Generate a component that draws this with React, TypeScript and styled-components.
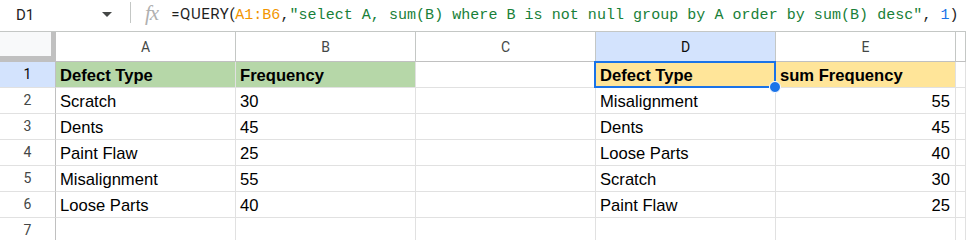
import React from "react";
import styled, { createGlobalStyle, css } from "styled-components";

const GlobalStyle = createGlobalStyle`
  html, body {
    margin: 0;
    padding: 0;
    background: #ffffff;
    overflow: hidden;
  }
`;

type Row = { a: string; b: string; d: string; e: string };

const rows: Row[] = [
  { a: "Scratch", b: "30", d: "Misalignment", e: "55" },
  { a: "Dents", b: "45", d: "Dents", e: "45" },
  { a: "Paint Flaw", b: "25", d: "Loose Parts", e: "40" },
  { a: "Misalignment", b: "55", d: "Scratch", e: "30" },
  { a: "Loose Parts", b: "40", d: "Paint Flaw", e: "25" },
  { a: "", b: "", d: "", e: "" },
];

const columns = ["A", "B", "C", "D", "E", ""];

const App: React.FC = () => {
  return (
    <>
      <GlobalStyle />
      <Page>
        <FormulaBar>
          <NameBox>
            <span>D1</span>
            <Caret />
          </NameBox>
          <Divider />
          <FxIcon>fx</FxIcon>
          <Formula>
            <FnName>=QUERY(</FnName>
            <Tok $kind="range">A1:B6</Tok>
            <Tok>,</Tok>
            <Tok $kind="string">
              "select A, sum(B) where B is not null group by A order by sum(B) desc"
            </Tok>
            <Tok>, </Tok>
            <Tok $kind="number">1</Tok>
            <Tok>)</Tok>
          </Formula>
        </FormulaBar>

        <Grid>
          <Corner />
          {columns.map((c, i) => (
            <ColHeader key={i} $active={c === "D"}>
              {c}
            </ColHeader>
          ))}

          <RowHeader $active>1</RowHeader>
          <Cell $bg="#b6d7a8" $bold>Defect Type</Cell>
          <Cell $bg="#b6d7a8" $bold>Frequency</Cell>
          <Cell />
          <Cell $bg="#ffe599" $bold $selected>
            Defect Type
            <FillHandle />
          </Cell>
          <Cell $bg="#ffe599" $bold>sum Frequency</Cell>
          <Cell />

          {rows.map((r, i) => (
            <React.Fragment key={i}>
              <RowHeader>{i + 2}</RowHeader>
              <Cell>{r.a}</Cell>
              <Cell>{r.b}</Cell>
              <Cell />
              <Cell>{r.d}</Cell>
              <Cell $right>{r.e}</Cell>
              <Cell />
            </React.Fragment>
          ))}
        </Grid>
      </Page>
    </>
  );
};

const Page = styled.div`
  width: 966px;
  height: 240px;
  overflow: hidden;
  background: #ffffff;
`;

const FormulaBar = styled.div`
  height: 32px;
  box-sizing: border-box;
  border-bottom: 1px solid #c4c7c5;
  display: flex;
  align-items: center;
  font-family: Roboto, "Liberation Sans", sans-serif;
  color: #1f1f1f;
`;

const NameBox = styled.div`
  width: 120px;
  box-sizing: border-box;
  padding: 0 8px 0 16px;
  display: flex;
  align-items: center;
  justify-content: space-between;
  font-size: 15px;
  margin-top: -2px;
`;

const Caret = styled.span`
  width: 0;
  height: 0;
  border-left: 5px solid transparent;
  border-right: 5px solid transparent;
  border-top: 5px solid #444746;
`;

const Divider = styled.div`
  width: 1px;
  height: 21px;
  background: #c4c7c5;
  margin: -6px 0 0 10px;
`;

const FxIcon = styled.span`
  font-family: "Liberation Serif", serif;
  font-style: italic;
  font-size: 21px;
  color: #b0b0b0;
  margin: -5px 0 0 14px;
  letter-spacing: -1px;
`;

const Formula = styled.div`
  margin: -2px 0 0 13px;
  white-space: pre;
  display: flex;
  align-items: baseline;
`;

const FnName = styled.span`
  font-family: Roboto, "Liberation Sans", sans-serif;
  font-size: 15px;
  color: #1f1f1f;
  letter-spacing: 0.6px;
`;

const tokColors: Record<string, string> = {
  range: "#f29500",
  string: "#188038",
  number: "#1a73e8",
  plain: "#1f1f1f",
};

const Tok = styled.span<{ $kind?: "range" | "string" | "number" }>`
  font-family: "Liberation Mono", "DejaVu Sans Mono", monospace;
  font-size: 15px;
  letter-spacing: 0.04px;
  color: ${(p) => tokColors[p.$kind ?? "plain"]};
`;

const Grid = styled.div`
  display: grid;
  grid-template-columns: 56px repeat(5, 180px) 1fr;
  grid-template-rows: 30px;
  grid-auto-rows: 26px;
`;

const headerBase = css`
  box-sizing: border-box;
  display: flex;
  align-items: center;
  justify-content: center;
  font-family: Roboto, "Liberation Sans", sans-serif;
  font-size: 14px;
`;

const Corner = styled.div`
  box-sizing: border-box;
  background: #f8f9fa;
  border-right: 5px solid #c0c0c0;
  border-bottom: 6px solid #c0c0c0;
`;

const ColHeader = styled.div<{ $active?: boolean }>`
  ${headerBase}
  border-right: 1px solid #c4c7c5;
  border-bottom: 1px solid #c0c0c0;
  background: ${(p) => (p.$active ? "#d3e3fd" : "#ffffff")};
  color: ${(p) => (p.$active ? "#0b0b0b" : "#444746")};
  padding-top: 1px;
`;

const RowHeader = styled.div<{ $active?: boolean }>`
  ${headerBase}
  border-right: 1px solid #c0c0c0;
  border-bottom: 1px solid #e1e1e1;
  background: ${(p) => (p.$active ? "#d3e3fd" : "#ffffff")};
  color: ${(p) => (p.$active ? "#0b0b0b" : "#444746")};
  padding-bottom: 2px;
`;

const Cell = styled.div<{
  $bg?: string;
  $bold?: boolean;
  $right?: boolean;
  $selected?: boolean;
}>`
  position: relative;
  box-sizing: border-box;
  border-right: 1px solid #e1e1e1;
  border-bottom: 1px solid #e1e1e1;
  background: ${(p) => p.$bg ?? "#ffffff"};
  display: flex;
  align-items: center;
  justify-content: ${(p) => (p.$right ? "flex-end" : "flex-start")};
  padding: 3px 5px 0 4px;
  font-family: "Liberation Sans", Arial, sans-serif;
  font-size: 16.6px;
  font-weight: ${(p) => (p.$bold ? 700 : 400)};
  color: #000000;
  white-space: nowrap;
  overflow: visible;

  ${(p) =>
    p.$selected &&
    css`
      &::after {
        content: "";
        position: absolute;
        top: -1px;
        left: -2px;
        right: -1px;
        bottom: -1px;
        border: 2px solid #1a73e8;
        pointer-events: none;
      }
    `}
`;

const FillHandle = styled.span`
  position: absolute;
  right: -6px;
  bottom: -6px;
  width: 10px;
  height: 10px;
  border-radius: 50%;
  background: #1a73e8;
  border: 1px solid #ffffff;
  z-index: 2;
`;

export default App;
